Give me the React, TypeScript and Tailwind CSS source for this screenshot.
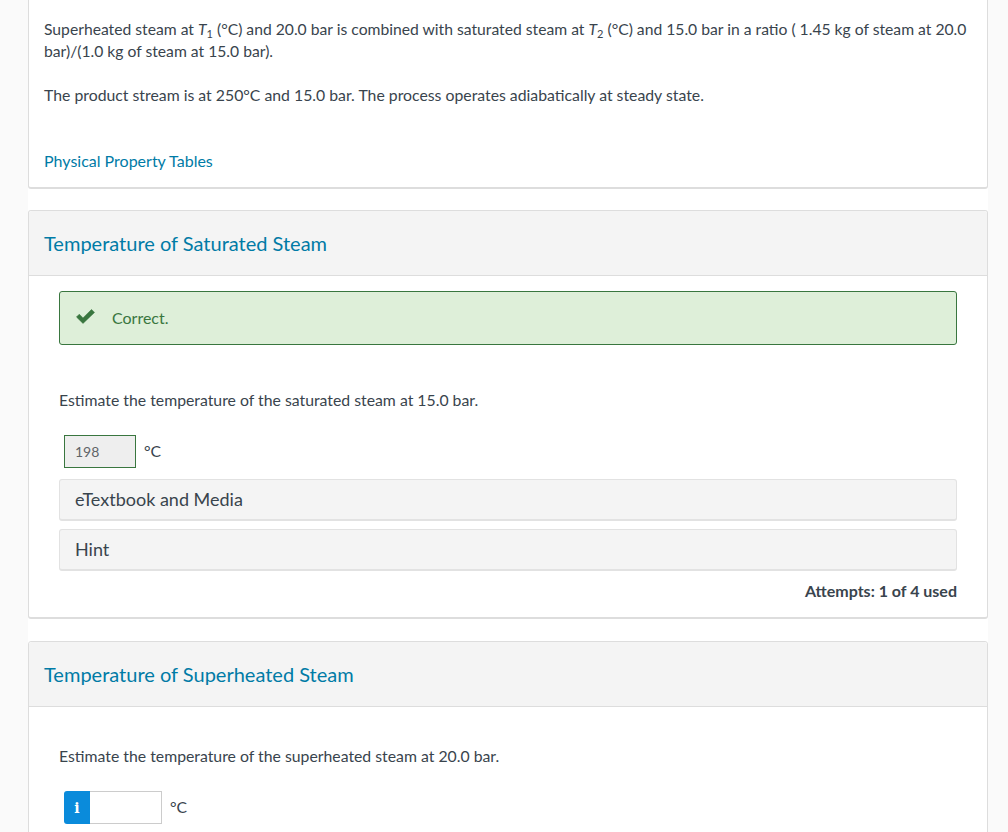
import React from 'react';

const QuestionHeader = ({ title }: { title: string }) => (
  <div className="h-[65px] flex items-center px-[15px] bg-[#f4f4f4] border-b border-[#dddddd] rounded-t-[3px]">
    <h2 className="text-[20px] leading-[28px] text-[#007ba6]">{title}</h2>
  </div>
);

const Accordion = ({ label }: { label: string }) => (
  <div className="h-[42px] flex items-center px-[15px] pb-[2px] bg-[#f4f4f4] border border-[#e2e2e2] border-b-2 rounded-[3px] text-[18px] text-[#39444d]">
    {label}
  </div>
);

export default function App() {
  return (
    <div className="h-[832px] overflow-hidden bg-[#fafafa] pl-[28px] pr-[20px] font-['Lato','Noto_Sans',sans-serif] text-[15.8px] leading-[22px] text-[#39444d]">
      <div className="bg-white flex flex-col gap-[21px] h-full">
        {/* 問題文 */}
        <section className="h-[189px] shrink-0 bg-white border border-t-0 border-[#dddddd] border-b-2 rounded-b-[3px] px-[15px] pt-[18px]">
          <p className="text-[15.7px] whitespace-nowrap">
            Superheated steam at <i>T</i>
            <sub className="text-[11px] leading-none">1</sub> (°C) and 20.0 bar is combined with saturated steam at <i>T</i>
            <sub className="text-[11px] leading-none">2</sub> (°C) and 15.0 bar in a ratio ( 1.45 kg of steam at 20.0
            <br />
            bar)/(1.0 kg of steam at 15.0 bar).
          </p>
          <p className="mt-[22px]">The product stream is at 250°C and 15.0 bar. The process operates adiabatically at steady state.</p>
          <a className="block mt-[44px] text-[16px] text-[#007ba6]">Physical Property Tables</a>
        </section>

        {/* 飽和蒸気 */}
        <section className="h-[409px] shrink-0 bg-white border border-[#dddddd] border-b-2 rounded-[3px]">
          <QuestionHeader title="Temperature of Saturated Steam" />
          <div className="px-[30px] pt-[15px]">
            <div className="h-[54px] flex items-center bg-[#deefd9] border border-[#39763f] rounded-[3px] pl-[16px] text-[#39763f]">
              <svg className="w-[19px] h-[15px] mb-[4px]" viewBox="0 0 19 15" fill="#39763f" stroke="#39763f" strokeWidth={0.6} strokeLinejoin="round">
                <path d="M.5 8 3.3 5.2 7 8.9 15.5 .5 18.5 3.4 7 14.4z" />
              </svg>
              <span className="ml-[17px] text-[16px]">Correct.</span>
            </div>
            <p className="mt-[44px]">Estimate the temperature of the saturated steam at 15.0 bar.</p>
            <div className="mt-[24px] ml-[5px] flex items-center">
              <div className="w-[72px] h-[33px] flex items-center px-[10px] bg-[#eeeeee] border border-[#39763f] text-[14px] text-[#5f6468]">198</div>
              <span className="ml-[8px] mb-[2px]">°C</span>
            </div>
            <div className="mt-[11px] flex flex-col gap-[8px]">
              <Accordion label="eTextbook and Media" />
              <Accordion label="Hint" />
            </div>
            <div className="mt-[9px] text-right font-bold text-[16px]">Attempts: 1 of 4 used</div>
          </div>
        </section>

        {/* 過熱蒸気 */}
        <section className="shrink-0 h-[300px] bg-white border border-[#dddddd] rounded-[3px] mt-px">
          <QuestionHeader title="Temperature of Superheated Steam" />
          <div className="px-[30px] pt-[38px]">
            <p>Estimate the temperature of the superheated steam at 20.0 bar.</p>
            <div className="mt-[24px] ml-[5px] flex items-center">
              <div className="w-[26px] h-[33px] flex items-center justify-center bg-[#0a8bdb] rounded-l-[3px] text-white text-[14px] font-bold font-['DejaVu_Serif',serif]">i</div>
              <div className="w-[72px] h-[33px] bg-white border border-l-0 border-[#cccccc]" />
              <span className="ml-[8px] mb-[2px]">°C</span>
            </div>
          </div>
        </section>
      </div>
    </div>
  );
}
